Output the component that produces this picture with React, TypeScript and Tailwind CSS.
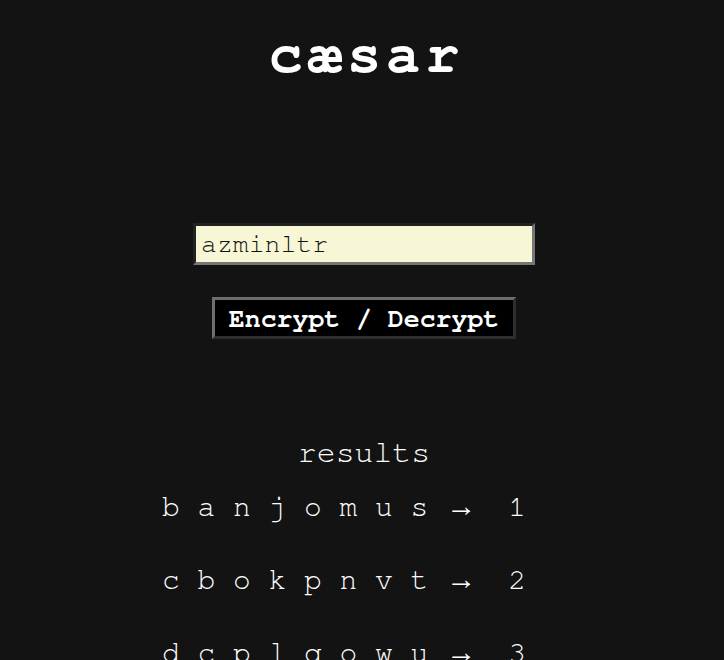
import React, { useState } from "react";

const mono = { fontFamily: '"FreeMono", "TeX Gyre Cursor", "Liberation Mono", monospace' };
const arrowFont = { fontFamily: '"Liberation Mono", monospace' };

function shift(word: string, n: number) {
  return word
    .split("")
    .map((ch) => {
      const c = ch.charCodeAt(0);
      if (c >= 97 && c <= 122) return String.fromCharCode(((c - 97 + n) % 26) + 97);
      return ch;
    })
    .join("");
}

export default function App() {
  const [text, setText] = useState("azminltr");
  const rows = [1, 2, 3].map((n) => ({ n, word: shift(text, n) }));

  return (
    <div className="min-h-screen bg-[#131313] text-white flex flex-col items-center pl-1" style={mono}>
      <h1 className="mt-[20px] text-[57px] font-bold leading-[70px] tracking-[5px] pl-[5px]">cæsar</h1>

      <input
        value={text}
        onChange={(e) => setText(e.target.value)}
        className="mt-[133px] w-[342px] h-[42px] bg-[#f7f7d6] text-[#111] text-[26.5px] pl-[5px] border-[3px] border-t-[#222] border-l-[#222] border-b-[#767676] border-r-[#767676] outline-none"
        style={mono}
      />

      <button
        className="mt-[32px] w-[304px] h-[42px] bg-black text-white font-bold text-[26.5px] border-[3px] border-t-[#6e6e6e] border-l-[#6e6e6e] border-b-[#2e2e2e] border-r-[#2e2e2e]"
        style={mono}
      >
        Encrypt / Decrypt
      </button>

      <h2 className="mt-[94px] text-[31.5px] leading-[40px]">results</h2>

      <div className="mt-[14px] flex flex-col gap-[32px] -ml-[40px]">
        {rows.map((r) => (
          <div key={r.n} className="flex items-baseline text-[29.6px] leading-[40px] whitespace-pre">
            <span>{r.word.split("").join(" ")}</span>
            <span className="ml-[24px] text-[30px]" style={arrowFont}>→</span>
            <span className="ml-[38px]">{r.n}</span>
          </div>
        ))}
      </div>
    </div>
  );
}
